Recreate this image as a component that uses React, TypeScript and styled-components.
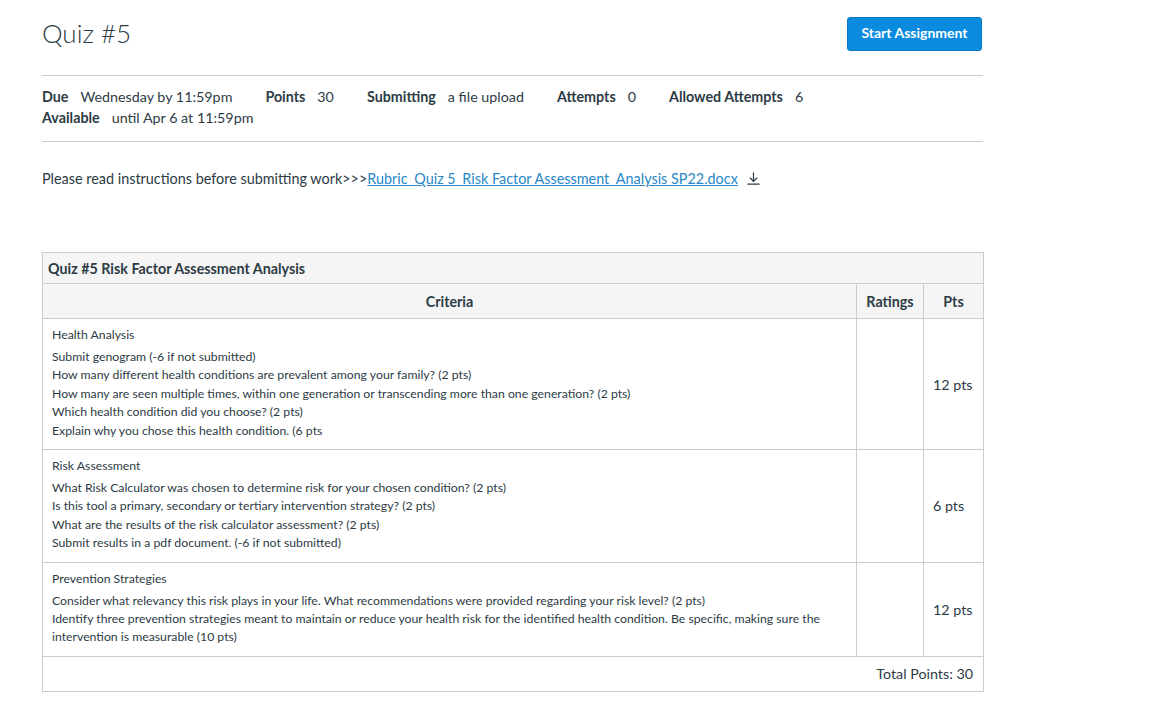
import React from "react";
import styled, { createGlobalStyle } from "styled-components";

const Global = createGlobalStyle`
  html, body { margin: 0; padding: 0; background: #fff; }
  body { font-family: Lato, "Open Sans", sans-serif; color: #2d3b45; }
  * { box-sizing: border-box; }
`;

const Page = styled.div`
  width: 941px;
  margin-left: 42px;
  padding-top: 16px;
`;

const Header = styled.div`
  display: flex;
  justify-content: space-between;
  align-items: center;
  height: 34px;
  margin-bottom: 25px;
`;

const Title = styled.h1`
  margin: 0;
  font-size: 26px;
  font-weight: 300;
  line-height: 32px;
  color: #2d3b45;
`;

const PrimaryButton = styled.button`
  width: 135px;
  height: 34px;
  margin-right: 1px;
  margin-top: 2px;
  border: 1px solid #0779c4;
  border-radius: 3px;
  background: #0a8be0;
  color: #fff;
  font-family: Lato, sans-serif;
  font-size: 14px;
  line-height: 20px;
  font-weight: 700;
  padding: 0 0 2px;
  cursor: pointer;
`;

const Details = styled.div`
  border-top: 1px solid #c7cdd1;
  border-bottom: 1px solid #c7cdd1;
  padding: 10px 0 13px;
  font-size: 14.3px;
  line-height: 21px;
`;

const DetailRow = styled.div`
  display: flex;
  gap: 33px;
`;

const DetailItem = styled.span`
  display: inline-flex;
  gap: 12px;
`;

const Label = styled.span`
  font-weight: 700;
`;

const Value = styled.span`
  font-weight: 400;
`;

const Intro = styled.p`
  margin: 26px 0 63px;
  font-size: 14.4px;
  line-height: 21px;
  display: flex;
  align-items: center;
`;

const FileLink = styled.a`
  color: #2a88c8;
  text-decoration: underline;
`;

const DownloadIcon = styled.svg`
  margin-left: 8px;
  width: 15px;
  height: 15px;
`;

const Rubric = styled.table`
  width: 941px;
  border-collapse: collapse;
  table-layout: fixed;
  font-size: 14.3px;
`;

const CaptionCell = styled.th`
  background: #f5f5f5;
  border: 1px solid #c7cdd1;
  text-align: left;
  font-weight: 700;
  padding: 0 5px;
  height: 31px;
`;

const HeadCell = styled.th`
  background: #f5f5f5;
  border: 1px solid #c7cdd1;
  text-align: center;
  font-weight: 700;
  color: #2d3b45;
  height: 35px;
  padding: 0;
`;

const CriteriaCell = styled.td`
  border: 1px solid #c7cdd1;
  padding: 7px 9px 9px;
  vertical-align: top;
  font-size: 12.25px;
`;

const CriterionTitle = styled.div`
  line-height: 18px;
  margin-bottom: 4px;
`;

const CriterionLine = styled.div`
  line-height: 18.4px;
`;

const EmptyCell = styled.td`
  border: 1px solid #c7cdd1;
`;

const PtsCell = styled.td`
  border: 1px solid #c7cdd1;
  padding: 0 9px;
  vertical-align: middle;
`;

const TotalCell = styled.td`
  border: 1px solid #c7cdd1;
  text-align: right;
  padding: 0 10px;
  height: 35px;
`;

const criteria = [
  {
    title: "Health Analysis",
    lines: [
      "Submit genogram (-6 if not submitted)",
      "How many different health conditions are prevalent among your family? (2 pts)",
      "How many are seen multiple times, within one generation or transcending more than one generation? (2 pts)",
      "Which health condition did you choose? (2 pts)",
      "Explain why you chose this health condition. (6 pts",
    ],
    pts: "12 pts",
  },
  {
    title: "Risk Assessment",
    lines: [
      "What Risk Calculator was chosen to determine risk for your chosen condition? (2 pts)",
      "Is this tool a primary, secondary or tertiary intervention strategy? (2 pts)",
      "What are the results of the risk calculator assessment? (2 pts)",
      "Submit results in a pdf document. (-6 if not submitted)",
    ],
    pts: "6 pts",
  },
  {
    title: "Prevention Strategies",
    lines: [
      "Consider what relevancy this risk plays in your life. What recommendations were provided regarding your risk level? (2 pts)",
      "Identify three prevention strategies meant to maintain or reduce your health risk for the identified health condition. Be specific, making sure the intervention is measurable (10 pts)",
    ],
    pts: "12 pts",
  },
];

export default function App() {
  return (
    <>
      <Global />
      <Page>
        <Header>
          <Title>Quiz #5</Title>
          <PrimaryButton>Start Assignment</PrimaryButton>
        </Header>
        <Details>
          <DetailRow>
            <DetailItem><Label>Due</Label><Value>Wednesday by 11:59pm</Value></DetailItem>
            <DetailItem><Label>Points</Label><Value>30</Value></DetailItem>
            <DetailItem><Label>Submitting</Label><Value>a file upload</Value></DetailItem>
            <DetailItem><Label>Attempts</Label><Value>0</Value></DetailItem>
            <DetailItem><Label>Allowed Attempts</Label><Value>6</Value></DetailItem>
          </DetailRow>
          <DetailRow>
            <DetailItem><Label>Available</Label><Value>until Apr 6 at 11:59pm</Value></DetailItem>
          </DetailRow>
        </Details>
        <Intro>
          Please read instructions before submitting work&gt;&gt;&gt;
          <FileLink href="#">Rubric_Quiz 5_Risk Factor Assessment_Analysis SP22.docx</FileLink>
          <DownloadIcon viewBox="0 0 16 16" fill="none" stroke="#2d3b45" strokeWidth="1.3" strokeLinecap="round">
            <path d="M8 2 V11" />
            <path d="M4.5 7.5 L8 11 L11.5 7.5" />
            <path d="M2 14 H14" />
          </DownloadIcon>
        </Intro>
        <Rubric>
          <colgroup>
            <col style={{ width: 814 }} />
            <col style={{ width: 67 }} />
            <col style={{ width: 60 }} />
          </colgroup>
          <thead>
            <tr>
              <CaptionCell colSpan={3}>Quiz #5 Risk Factor Assessment Analysis</CaptionCell>
            </tr>
            <tr>
              <HeadCell>Criteria</HeadCell>
              <HeadCell>Ratings</HeadCell>
              <HeadCell>Pts</HeadCell>
            </tr>
          </thead>
          <tbody>
            {criteria.map((c) => (
              <tr key={c.title}>
                <CriteriaCell>
                  <CriterionTitle>{c.title}</CriterionTitle>
                  {c.lines.map((l) => (
                    <CriterionLine key={l}>{l}</CriterionLine>
                  ))}
                </CriteriaCell>
                <EmptyCell />
                <PtsCell>{c.pts}</PtsCell>
              </tr>
            ))}
            <tr>
              <TotalCell colSpan={3}>Total Points: 30</TotalCell>
            </tr>
          </tbody>
        </Rubric>
      </Page>
    </>
  );
}
